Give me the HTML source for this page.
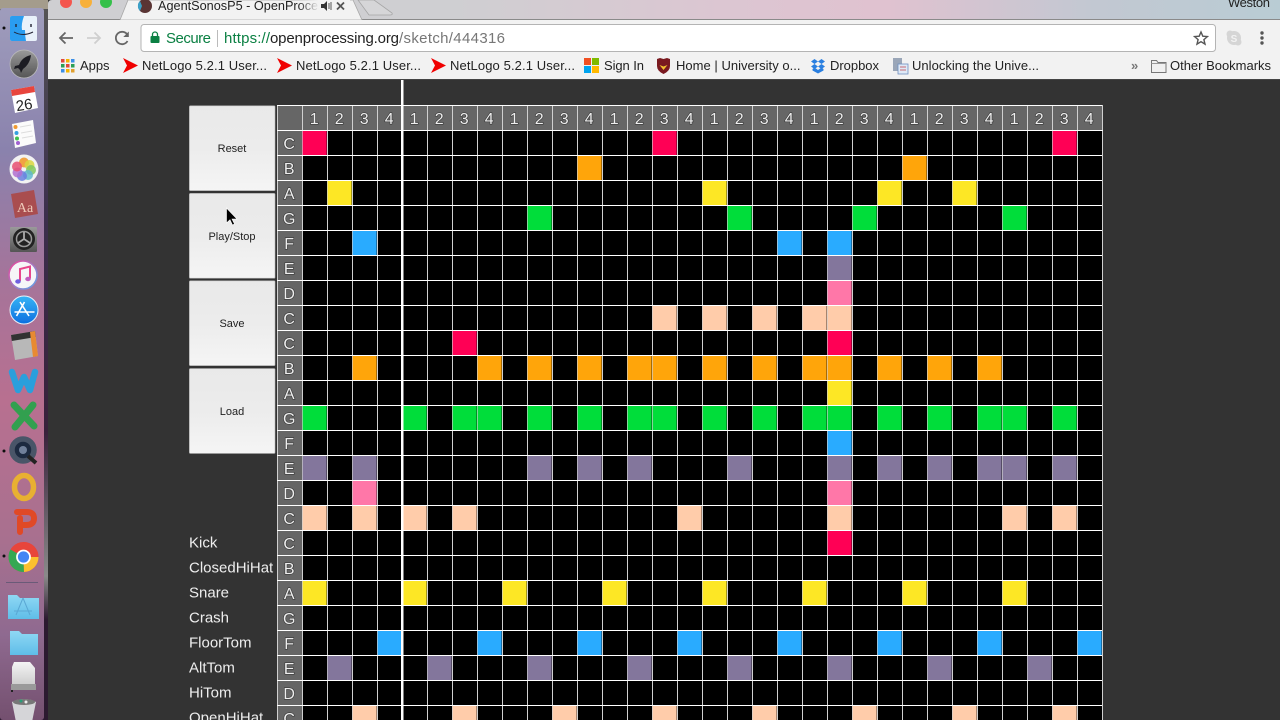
<!DOCTYPE html>
<html><head><meta charset="utf-8"><title>AgentSonosP5 - OpenProcessing</title>
<style>
html,body{margin:0;padding:0;width:1280px;height:720px;overflow:hidden;background:#333}
svg{display:block;font-family:"Liberation Sans",sans-serif}
</style></head><body>
<svg width="1280" height="720" viewBox="0 0 1280 720" xmlns="http://www.w3.org/2000/svg">
<defs>
<linearGradient id="title" x1="0" x2="1" y1="0" y2="0"><stop offset="0" stop-color="#cfcfd2"/><stop offset=".33" stop-color="#cfcfd2"/><stop offset=".55" stop-color="#dcc6d2"/><stop offset=".68" stop-color="#e0c2d0"/><stop offset=".85" stop-color="#c2c8d2"/><stop offset="1" stop-color="#b9ccd4"/></linearGradient>
<linearGradient id="dock" x1="0" x2="0" y1="0" y2="1"><stop offset="0" stop-color="#9f9dbc"/><stop offset=".2" stop-color="#8a82ad"/><stop offset=".38" stop-color="#a5749a"/><stop offset=".55" stop-color="#b87090"/><stop offset=".75" stop-color="#a8708f"/><stop offset=".88" stop-color="#8f6a90"/><stop offset="1" stop-color="#74506f"/></linearGradient>
<linearGradient id="strip" x1="0" x2="0" y1="0" y2="1"><stop offset="0" stop-color="#555"/><stop offset=".3" stop-color="#3c2f4d"/><stop offset=".6" stop-color="#39213b"/><stop offset=".8" stop-color="#8a8a8a"/><stop offset=".86" stop-color="#2c1a30"/><stop offset="1" stop-color="#2c1a30"/></linearGradient>
<linearGradient id="btn" x1="0" x2="0" y1="0" y2="1"><stop offset="0" stop-color="#e9e9e9"/><stop offset=".5" stop-color="#ececec"/><stop offset="1" stop-color="#f5f5f5"/></linearGradient>
<linearGradient id="fade" x1="0" x2="1" y1="0" y2="0"><stop offset="0" stop-color="#f2f2f2" stop-opacity="0"/><stop offset="1" stop-color="#f2f2f2"/></linearGradient>
<linearGradient id="fold" x1="0" x2="0" y1="0" y2="1"><stop offset="0" stop-color="#8fd8f4"/><stop offset="1" stop-color="#5fbde8"/></linearGradient>
<linearGradient id="sphere" x1="0" x2="0" y1="0" y2="1"><stop offset="0" stop-color="#36b4f5"/><stop offset="1" stop-color="#0d6fe0"/></linearGradient>
<linearGradient id="itunes" x1="0" x2="1" y1="0" y2="1"><stop offset="0" stop-color="#f0449a"/><stop offset="1" stop-color="#5aa6ea"/></linearGradient>
<linearGradient id="gray" x1="0" x2="0" y1="0" y2="1"><stop offset="0" stop-color="#9a9a9a"/><stop offset="1" stop-color="#555"/></linearGradient>
<linearGradient id="drv" x1="0" x2="0" y1="0" y2="1"><stop offset="0" stop-color="#f4f4f4"/><stop offset="1" stop-color="#cfcfcf"/></linearGradient>
<pattern id="gb" patternUnits="userSpaceOnUse" x="277" y="105" width="25" height="25"><rect width="25" height="25" fill="#000"/><rect width="1" height="25" fill="#d0d0d0"/><rect width="25" height="1" fill="#fff"/></pattern>
<pattern id="gh" patternUnits="userSpaceOnUse" x="277" y="105" width="25" height="25"><rect width="25" height="25" fill="#666"/><rect width="1" height="25" fill="#d0d0d0"/><rect width="25" height="1" fill="#fff"/></pattern>
<filter id="soft" x="-5%" y="-5%" width="110%" height="110%"><feGaussianBlur stdDeviation=".35"/></filter>
</defs>

<!-- wallpaper + window -->
<rect width="1280" height="720" fill="#333"/>
<rect x="0" y="0" width="48" height="720" fill="url(#strip)"/>
<rect x="0" y="0" width="48" height="9" fill="#a49c8c"/>
<rect x="0" y="8" width="44" height="712" rx="3" fill="url(#dock)"/>

<!-- title strip -->
<path d="M48 20V4q0-4 4-4H1280V20z" fill="url(#title)"/>
<rect x="48" y="19" width="1232" height="1" fill="#8a8a8a"/>
<circle cx="66" cy="2" r="6" fill="#f4564e"/><circle cx="86" cy="2" r="6" fill="#f7b03a"/><circle cx="106" cy="2" r="6" fill="#35c04a"/>
<path d="M120 20L128 0H353L362 20z" fill="#f2f2f2" stroke="#a8a8a8" stroke-width=".8"/>
<path d="M358 0h16l18 13q1 2-2 2H369z" fill="#d6d6d8" stroke="#a5a5a5" stroke-width=".8"/>
<circle cx="145" cy="6" r="7" fill="#5a3434"/><path d="M145-1a7 7 0 0 1 0 14a7 7 0 0 0 0-14" fill="#d94a4a"/><path d="M140 1a7 7 0 0 0 0 10l2-5z" fill="#3aa0c8"/>
<text x="158" y="10" font-size="12.700" fill="#222">AgentSonosP5 - OpenProcess</text>
<rect x="298" y="0" width="21" height="16" fill="url(#fade)"/>
<rect x="319" y="0" width="31" height="16" fill="#f2f2f2"/>
<path d="M321 4h3l3-3v10l-3-3h-3z" fill="#333"/><path d="M329 3v6M331 2v8" stroke="#555" stroke-width="1"/>
<path d="M337 2.500l7 7M344 2.500l-7 7" stroke="#555" stroke-width="1.800"/>

<!-- toolbar -->
<rect x="48" y="20" width="1232" height="60" fill="#f2f2f2"/>
<rect x="141" y="24.500" width="1074.500" height="27" rx="3" fill="#fff" stroke="#b4b4b4"/>
<path d="M73 38H60M65.500 32.500L60 38l5.500 5.500" fill="none" stroke="#666" stroke-width="1.800"/>
<path d="M87 38h13M94.500 32.500L100 38l-5.500 5.500" fill="none" stroke="#cfcfcf" stroke-width="1.800"/>
<path d="M127.500 41a6.200 6.200 0 1 1 0-6" fill="none" stroke="#666" stroke-width="1.800"/><path d="M128.800 31.500v5.500h-5.500z" fill="#666"/>
<rect x="150.500" y="36" width="9" height="7" rx="1" fill="#0b8043"/><path d="M152.500 36v-1.500a2.500 2.500 0 0 1 5 0V36" fill="none" stroke="#0b8043" stroke-width="1.300"/>
<text x="166" y="43" font-size="15" fill="#0b8043" textLength="45">Secure</text>
<rect x="217" y="30" width="1" height="17" fill="#bbb"/>
<text x="224" y="43" font-size="15" fill="#0b8043" textLength="46">https://</text>
<text x="270" y="43" font-size="15" fill="#222" textLength="129">openprocessing.org</text>
<text x="399" y="43" font-size="15" fill="#777" textLength="106">/sketch/444316</text>
<path d="M1201 32l1.800 4.200 4.600.4-3.500 3 1.100 4.500-4-2.400-4 2.400 1.100-4.500-3.500-3 4.600-.4z" fill="none" stroke="#555" stroke-width="1.400"/>
<circle cx="1234" cy="38" r="7" fill="#d5d5d5"/><circle cx="1230" cy="34" r="3.500" fill="#d5d5d5"/><circle cx="1238" cy="42" r="3.500" fill="#d5d5d5"/>
<text x="1234" y="42" font-size="10" font-weight="bold" fill="#f2f2f2" text-anchor="middle">S</text>
<circle cx="1262" cy="33" r="1.700" fill="#555"/><circle cx="1262" cy="38" r="1.700" fill="#555"/><circle cx="1262" cy="43" r="1.700" fill="#555"/>

<!-- bookmarks -->
<g>
<rect x="61" y="59" width="3.500" height="3.500" fill="#e0483c"/><rect x="66" y="59" width="3.500" height="3.500" fill="#f4b400"/><rect x="71" y="59" width="3.500" height="3.500" fill="#3a8ee6"/>
<rect x="61" y="64" width="3.500" height="3.500" fill="#2a9d57"/><rect x="66" y="64" width="3.500" height="3.500" fill="#e0483c"/><rect x="71" y="64" width="3.500" height="3.500" fill="#2a9d57"/>
<rect x="61" y="69" width="3.500" height="3.500" fill="#3a8ee6"/><rect x="66" y="69" width="3.500" height="3.500" fill="#f4b400"/><rect x="71" y="69" width="3.500" height="3.500" fill="#e0a030"/>
<path d="M123 58l15 7.500-15 7.500 4-7.500z" fill="#f00000"/>
<path d="M277 58l15 7.500-15 7.500 4-7.500z" fill="#f00000"/>
<path d="M431 58l15 7.500-15 7.500 4-7.500z" fill="#f00000"/>
<rect x="584" y="58" width="7" height="7" fill="#f25022"/><rect x="592" y="58" width="7" height="7" fill="#7fba00"/><rect x="584" y="66" width="7" height="7" fill="#00a4ef"/><rect x="592" y="66" width="7" height="7" fill="#ffb900"/>
<path d="M657 59l3-1 3.500 1 3.500-1 3 1v7q0 5-6.500 8-6.500-3-6.500-8z" fill="#7a1a20"/><path d="M659.500 65l4 5 4-5-4 1.500z" fill="#f2c230"/>
<path d="M814.500 59l3.500 2.500-3.500 2.500-3.500-2.500zM821.500 59l3.500 2.500-3.500 2.500-3.500-2.500zM814.500 64l3.500 2.500-3.500 2.500-3.500-2.500zM821.500 64l3.500 2.500-3.500 2.500-3.500-2.500zM818 70l3.500-2.500 2 1.500v1.500L818 73.500 812.500 70.500V69l2-1.500z" fill="#2a7fe0"/>
<rect x="893" y="58" width="9" height="13" fill="#9aa6b8"/><rect x="898" y="64" width="10" height="10" fill="#dfe9f6" stroke="#6f8fc0" stroke-width=".8"/><path d="M900 67h6M900 70h6" stroke="#c0404a" stroke-width=".8"/>
<text x="1131" y="70" font-size="13" fill="#777" font-weight="bold">»</text>
<path d="M1151.500 60.500h5l1.500 2h8v10h-14.500z" fill="#f0f0f0" stroke="#777"/><path d="M1151.500 63.500h14.500" stroke="#999"/>
<g font-size="13" fill="#222">
<text x="80" y="70" textLength="29.500">Apps</text>
<text x="142" y="70" textLength="125">NetLogo 5.2.1 User...</text>
<text x="296" y="70" textLength="125">NetLogo 5.2.1 User...</text>
<text x="450" y="70" textLength="125">NetLogo 5.2.1 User...</text>
<text x="604" y="70" textLength="40">Sign In</text>
<text x="676" y="70" textLength="124.500">Home | University o...</text>
<text x="830" y="70" textLength="49">Dropbox</text>
<text x="912" y="70" textLength="127">Unlocking the Unive...</text>
<text x="1170" y="70" textLength="101">Other Bookmarks</text>
</g>
<text x="1228" y="7" font-size="13" fill="#222" textLength="42">Weston</text>
<rect x="48" y="79" width="1232" height="1" fill="#444"/>
</g>

<!-- page -->
<rect x="48" y="80" width="1232" height="640" fill="#333"/>
<rect x="189.400" y="105.800" width="85.600" height="84.800" rx="1" fill="url(#btn)" stroke="#b8b8b8" stroke-width=".6"/>
<rect x="189.400" y="193.400" width="85.600" height="84.800" rx="1" fill="url(#btn)" stroke="#b8b8b8" stroke-width=".6"/>
<rect x="189.400" y="280.800" width="85.600" height="84.800" rx="1" fill="url(#btn)" stroke="#b8b8b8" stroke-width=".6"/>
<rect x="189.400" y="368.600" width="85.600" height="84.800" rx="1" fill="url(#btn)" stroke="#b8b8b8" stroke-width=".6"/>
<g font-size="11" fill="#222" text-anchor="middle">
<text x="232" y="152">Reset</text><text x="232" y="240">Play/Stop</text><text x="232" y="327">Save</text><text x="232" y="415">Load</text>
</g>
<g font-size="15" fill="#eee">
<text x="189" y="547.500">Kick</text>
<text x="189" y="572.500">ClosedHiHat</text>
<text x="189" y="597.500">Snare</text>
<text x="189" y="622.500">Crash</text>
<text x="189" y="647.500">FloorTom</text>
<text x="189" y="672.500">AltTom</text>
<text x="189" y="697.500">HiTom</text>
<text x="189" y="722.500">OpenHiHat</text>
</g>

<!-- grid -->
<rect x="277" y="105" width="826" height="615" fill="url(#gb)"/>
<rect x="277" y="105" width="826" height="25" fill="url(#gh)"/>
<rect x="277" y="130" width="25" height="590" fill="url(#gh)"/>
<rect x="1102" y="105" width="1" height="615" fill="#d0d0d0"/>
<rect x="277" y="130" width="826" height="1" fill="#fff"/>
<g font-size="16" fill="#eee" stroke="#3a3a3a" stroke-width="1.300" paint-order="stroke" text-anchor="middle">
<text y="124" x="314.200 339.200 364.200 389.200 414.200 439.200 464.200 489.200 514.200 539.200 564.200 589.200 614.200 639.200 664.200 689.200 714.200 739.200 764.200 789.200 814.200 839.200 864.200 889.200 914.200 939.200 964.200 989.200 1014.200 1039.200 1064.200 1089.200">12341234123412341234123412341234</text>
<text x="289.200 289.200 289.200 289.200 289.200 289.200 289.200 289.200 289.200 289.200 289.200 289.200 289.200 289.200 289.200 289.200 289.200 289.200 289.200 289.200 289.200 289.200 289.200 289.200" y="149 174 199 224 249 274 299 324 349 374 399 424 449 474 499 524 549 574 599 624 649 674 699 724">CBAGFEDCCBAGFEDCCBAGFEDC</text>
</g>

<g transform="translate(-.35 0)">
<!-- red -->
<path fill="#ff0055" d="M303 131h24v24h-24zM653 131h24v24h-24zM1053 131h24v24h-24zM453 331h24v24h-24zM828 331h24v24h-24zM828 531h24v24h-24z"/>
<!-- orange -->
<path fill="#ffa50a" d="M578 156h24v24h-24zM903 156h24v24h-24zM353 356h24v24h-24zM478 356h24v24h-24zM528 356h24v24h-24zM578 356h24v24h-24zM628 356h24v24h-24zM653 356h24v24h-24zM703 356h24v24h-24zM753 356h24v24h-24zM803 356h24v24h-24zM828 356h24v24h-24zM878 356h24v24h-24zM928 356h24v24h-24zM978 356h24v24h-24z"/>
<!-- yellow -->
<path fill="#fde725" d="M328 181h24v24h-24zM703 181h24v24h-24zM878 181h24v24h-24zM953 181h24v24h-24zM828 381h24v24h-24zM303 581h24v24h-24zM403 581h24v24h-24zM503 581h24v24h-24zM603 581h24v24h-24zM703 581h24v24h-24zM803 581h24v24h-24zM903 581h24v24h-24zM1003 581h24v24h-24z"/>
<!-- green -->
<path fill="#00dd3a" d="M528 206h24v24h-24zM728 206h24v24h-24zM853 206h24v24h-24zM1003 206h24v24h-24zM303 406h24v24h-24zM403 406h24v24h-24zM453 406h24v24h-24zM478 406h24v24h-24zM528 406h24v24h-24zM578 406h24v24h-24zM628 406h24v24h-24zM653 406h24v24h-24zM703 406h24v24h-24zM753 406h24v24h-24zM803 406h24v24h-24zM828 406h24v24h-24zM878 406h24v24h-24zM928 406h24v24h-24zM978 406h24v24h-24zM1003 406h24v24h-24zM1053 406h24v24h-24z"/>
<!-- blue -->
<path fill="#29abff" d="M353 231h24v24h-24zM778 231h24v24h-24zM828 231h24v24h-24zM828 431h24v24h-24zM378 631h24v24h-24zM478 631h24v24h-24zM578 631h24v24h-24zM678 631h24v24h-24zM778 631h24v24h-24zM878 631h24v24h-24zM978 631h24v24h-24zM1078 631h24v24h-24z"/>
<!-- purple -->
<path fill="#83769c" d="M828 256h24v24h-24zM303 456h24v24h-24zM353 456h24v24h-24zM528 456h24v24h-24zM578 456h24v24h-24zM628 456h24v24h-24zM728 456h24v24h-24zM828 456h24v24h-24zM878 456h24v24h-24zM928 456h24v24h-24zM978 456h24v24h-24zM1003 456h24v24h-24zM1053 456h24v24h-24zM328 656h24v24h-24zM428 656h24v24h-24zM528 656h24v24h-24zM628 656h24v24h-24zM728 656h24v24h-24zM828 656h24v24h-24zM928 656h24v24h-24zM1028 656h24v24h-24z"/>
<!-- pink -->
<path fill="#ff77a8" d="M828 281h24v24h-24zM353 481h24v24h-24zM828 481h24v24h-24z"/>
<!-- peach -->
<path fill="#ffccaa" d="M653 306h24v24h-24zM703 306h24v24h-24zM753 306h24v24h-24zM803 306h24v24h-24zM828 306h24v24h-24zM303 506h24v24h-24zM353 506h24v24h-24zM403 506h24v24h-24zM453 506h24v24h-24zM678 506h24v24h-24zM828 506h24v24h-24zM1003 506h24v24h-24zM1053 506h24v24h-24zM353 706h24v14h-24zM453 706h24v14h-24zM553 706h24v14h-24zM653 706h24v14h-24zM753 706h24v14h-24zM853 706h24v14h-24zM953 706h24v14h-24zM1053 706h24v14h-24z"/>
</g>

<!-- playhead -->
<rect x="401" y="80" width="2.500" height="640" fill="#fff"/>

<!-- cursor -->
<path d="M226.500 208v15l3.500-3.300 2.500 5.300 2-1-2.500-5h5z" fill="#000" stroke="#fff" stroke-width=".6"/>

<!-- dock -->
<g filter="url(#soft)">
<circle cx="4" cy="28" r="1.500" fill="#111"/><circle cx="4" cy="451" r="1.500" fill="#111"/><circle cx="4" cy="556" r="1.500" fill="#111"/>
<!-- finder -->
<rect x="10" y="16" width="27" height="25" rx="2" fill="#e8f1fa"/><path d="M12 16h12q-3 8-2 14h3q0 6 1 11H12q-2 0-2-2V18q0-2 2-2z" fill="#2a9df0"/>
<path d="M16 24v3M31 24v3" stroke="#223" stroke-width="1.400"/><path d="M14 32q9 5 19 0" fill="none" stroke="#223" stroke-width="1"/>
<!-- rocket -->
<circle cx="24" cy="64" r="14" fill="url(#gray)" stroke="#bbb" stroke-width=".8"/><path d="M31 55q-9 2-12 10l-4 1-1 3 4-1 2 2 1 3 2-4q7-5 8-14z" fill="#1f1f22"/>
<!-- calendar -->
<path d="M11 90l23-4 4 22-23 5z" fill="#fff"/><path d="M11 90l23-4 1 6-23 4z" fill="#e8443c"/>
<text x="24" y="110" font-size="15" fill="#222" text-anchor="middle" transform="rotate(-9 24 104)">26</text>
<!-- reminders -->
<path d="M12 124l21-4 3 23-21 5z" fill="#fbfbfb"/><circle cx="15.500" cy="127" r="2" fill="#f09a30"/><circle cx="16.500" cy="133" r="2" fill="#35a0e0"/><circle cx="17" cy="138.500" r="2" fill="#3fc050"/><circle cx="18" cy="143" r="2" fill="#a060d0"/>
<path d="M20 127l11-2M21 133l11-2M22 138l11-2" stroke="#ddd"/>
<!-- photos -->
<circle cx="24" cy="169" r="14.500" fill="#f2f2f2"/>
<circle cx="24" cy="162.500" r="5" fill="#f09a30" opacity=".9"/><circle cx="29.500" cy="165" r="5" fill="#d9d640" opacity=".85"/><circle cx="31" cy="170" r="5" fill="#80c860" opacity=".85"/><circle cx="28" cy="175" r="5" fill="#60b8d0" opacity=".85"/><circle cx="22" cy="176" r="5" fill="#6a80e0" opacity=".85"/><circle cx="17.500" cy="172.500" r="5" fill="#b070d0" opacity=".85"/><circle cx="17" cy="166.500" r="5" fill="#e85070" opacity=".85"/>
<!-- dictionary -->
<path d="M11 194l23-4 4 24-23 4z" fill="#a94d50"/><text x="25" y="212" font-family="'Liberation Serif',serif" font-size="14" fill="#eec9b8" text-anchor="middle">Aa</text>
<!-- prefs -->
<rect x="10" y="227" width="27" height="25" rx="1" fill="url(#gray)"/><circle cx="24" cy="239" r="11" fill="#222"/><circle cx="24" cy="239" r="7.500" fill="none" stroke="#999" stroke-width="1.500"/><path d="M24 239v-7M24 239l6 4M24 239l-6 4" stroke="#aaa" stroke-width="1.800"/>
<!-- itunes -->
<circle cx="23" cy="275" r="14" fill="#f6f6f8" stroke="url(#itunes)" stroke-width="1.600"/><path d="M20 281v-12l10-2.500v12" fill="none" stroke="#e8468c" stroke-width="2"/><ellipse cx="18" cy="281.500" rx="2.800" ry="2.200" fill="#7060e0"/><ellipse cx="28" cy="279" rx="2.800" ry="2.200" fill="#c060c0"/>
<!-- app store -->
<circle cx="24" cy="310" r="14" fill="url(#sphere)" stroke="#e8f0f8" stroke-width="1"/><path d="M24.500 302l-8 14M20 302l9 14M14.500 312h20" stroke="#fff" stroke-width="1.600" fill="none"/>
<!-- calc -->
<path d="M11 335l24-4 3 25-23 4z" fill="#b8b8b8"/><path d="M11 335l24-4 .8 6-24 4z" fill="#333"/><path d="M30 332l5-1 3 25-5 1z" fill="#e88a30"/>
<!-- word -->
<path d="M12 372L18 390 24 377 30 390 35 372" fill="none" stroke="#2a9fdc" stroke-width="6.500" stroke-linecap="round" stroke-linejoin="round"/>
<!-- excel -->
<path d="M14 405l20 21M33 405L15 427" stroke="#30a050" stroke-width="7" stroke-linecap="round"/>
<!-- quicktime -->
<circle cx="23" cy="450" r="11" fill="#1e2a40" stroke="#4a5568" stroke-width="5.500"/><circle cx="23" cy="450" r="4" fill="#70809a"/><path d="M28 456l8 7" stroke="#222" stroke-width="4"/>
<!-- outlook -->
<ellipse cx="24" cy="487" rx="9.500" ry="11.500" fill="none" stroke="#e8b030" stroke-width="5.500"/>
<!-- powerpoint -->
<path d="M20 532V518M17 512h10q7 0 7 6.500t-8 6.500h-6" fill="none" stroke="#e04828" stroke-width="6" stroke-linecap="round"/>
<!-- chrome -->
<circle cx="23.500" cy="557" r="15" fill="#e8443a"/><path d="M23.500 557L10.500 549.500A15 15 0 0 0 24 572z" fill="#34a853"/><path d="M23.500 557L38.500 557A15 15 0 0 1 24 572z" fill="#fbc02d"/><path d="M23.500 557L23.500 542A15 15 0 0 1 38.500 557z" fill="#e8443a"/>
<circle cx="23.500" cy="557" r="6.500" fill="#4285f4" stroke="#fff" stroke-width="1.800"/>
<!-- separator -->
<rect x="6" y="582" width="32" height="1" fill="#6a5a78"/>
<!-- apps folder -->
<path d="M8 595h9l3 3h19v21H8z" fill="url(#fold)"/><path d="M23 598l-7 17M23 598l7 17M14 611h18" stroke="#5aa8d4" stroke-width="1"/>
<!-- folder -->
<path d="M10 631h9l3 3h16v21H10z" fill="url(#fold)"/>
<!-- drive -->
<path d="M14 662h16l5 6v16H12v-17z" fill="url(#drv)"/><rect x="11" y="684" width="25" height="6" fill="#9a9a9a"/><rect x="11" y="690" width="2" height="2" fill="#222"/>
<!-- trash -->
<path d="M12 702q12-6 24 0l-4 20H16z" fill="#d5d5d8"/><ellipse cx="24" cy="702" rx="11" ry="3" fill="#777"/><circle cx="21" cy="701" r="1.500" fill="#2a9d77"/><circle cx="26" cy="702" r="1.500" fill="#eee"/>
</g>
</svg>
</body></html>
